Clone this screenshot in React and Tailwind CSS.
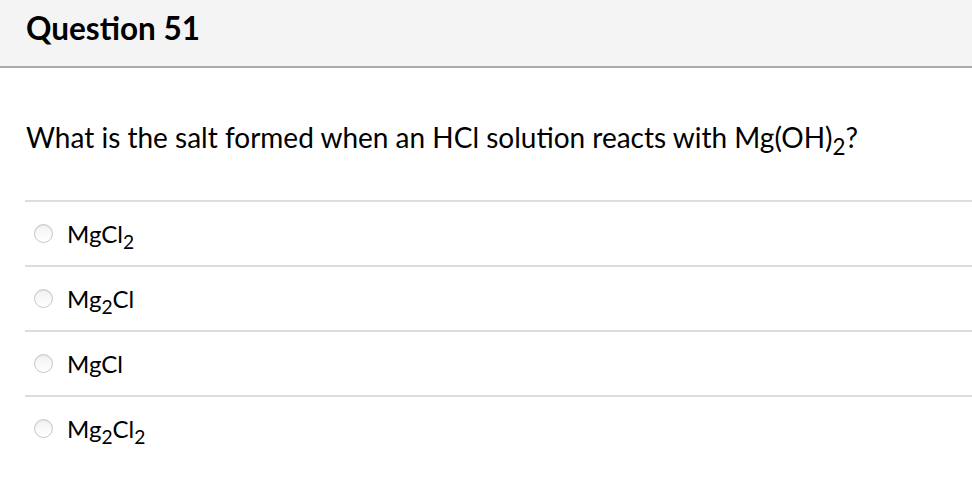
import React from 'react';

const OPTIONS = [
  ['MgCl', 2],
  ['Mg', 2, 'Cl'],
  ['MgCl'],
  ['Mg', 2, 'Cl', 2],
];

function Sub({ children }) {
  return <span className="relative top-[0.32em] text-[0.8em] leading-none">{children}</span>;
}

export default function App() {
  return (
    <div className="min-h-screen bg-white text-black" style={{ fontFamily: 'Lato, "Open Sans", sans-serif' }}>
      <header className="h-[68px] bg-[#f4f4f4] border-b-2 border-[#aaaaaa] pl-[26px] flex items-center">
        <h1 className="text-[31.5px] font-bold leading-none pb-[9px]">Question 51</h1>
      </header>

      <main className="pl-[25px]">
        <p className="pt-[51px] pl-px text-[28px] leading-[36px]">
          What is the salt formed when an HCl solution reacts with Mg(OH)<Sub>2</Sub>?
        </p>

        <ul className="mt-[45px]">
          {OPTIONS.map((o, i) => (
            <li key={i} className="h-[65px] border-t-2 border-[#dddddd] flex items-center pl-[9px] gap-[14px]">
              <span className="w-[19px] h-[19px] rounded-full border border-[#c8c8c8] bg-gradient-to-b from-[#f2f2f2] to-white shadow-[inset_0_1px_1px_rgba(0,0,0,0.08)]" />
              <span className="text-[24px] leading-none">
                {o.map((p, j) => (typeof p === 'number' ? <Sub key={j}>{p}</Sub> : <span key={j}>{p}</span>))}
              </span>
            </li>
          ))}
        </ul>
      </main>
    </div>
  );
}
